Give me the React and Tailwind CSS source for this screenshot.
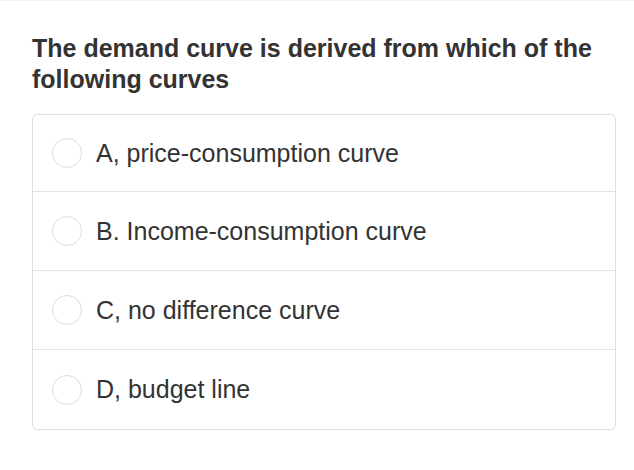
export default function App() {
  const options = [
    "A, price-consumption curve",
    "B. Income-consumption curve",
    "C, no difference curve",
    "D, budget line",
  ];
  return (
    <div
      className="w-[634px] h-[470px] bg-white border-t border-[#f2f2f2] text-[#333]"
      style={{ fontFamily: '"Liberation Sans", Arial, sans-serif' }}
    >
      <div className="pl-[32px] pr-[18px] pt-[32px]">
        <h1 className="text-[25px] leading-[31px] font-bold text-[#333]">
          The demand curve is derived from which of the following curves
        </h1>
        <div className="mt-[19px] border border-[#dedede] rounded-[5px] divide-y divide-[#e3e3e3]">
          {options.map((o, i) => (
            <label
              key={o}
              className={`flex items-center pl-[19px] gap-[14px] cursor-pointer ${i === 0 ? "h-[77px]" : "h-[79px]"}`}
            >
              <span className="w-[30px] h-[30px] rounded-full border-[1.5px] border-[#dcdcdc] bg-white shrink-0" />
              <span className="text-[25px] leading-none text-[#333]">{o}</span>
            </label>
          ))}
        </div>
      </div>
    </div>
  );
}
